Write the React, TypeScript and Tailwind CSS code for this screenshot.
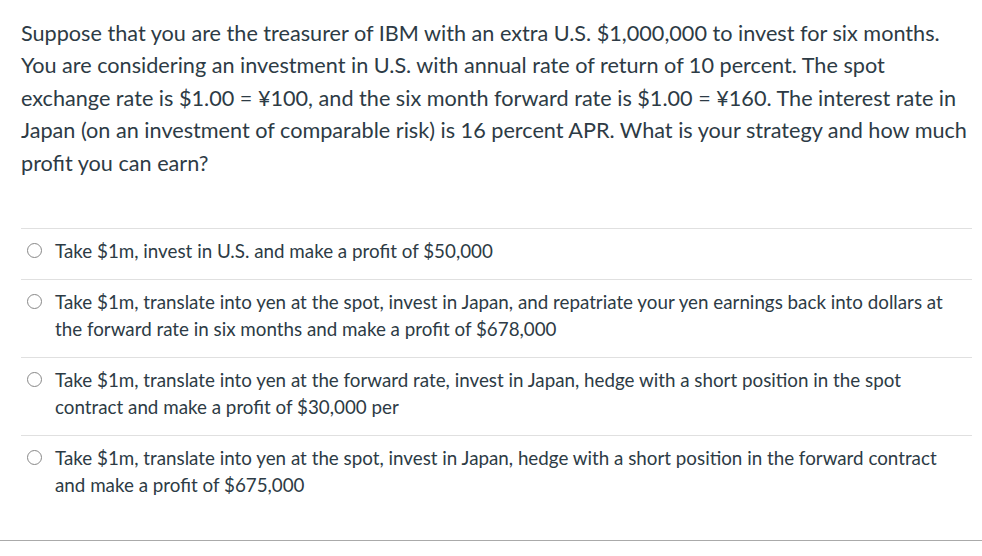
import React from "react";

const options = [
  "Take $1m, invest in U.S. and make a profit of $50,000",
  "Take $1m, translate into yen at the spot, invest in Japan, and repatriate your yen earnings back into dollars at the forward rate in six months and make a profit of $678,000",
  "Take $1m, translate into yen at the forward rate, invest in Japan, hedge with a short position in the spot contract and make a profit of $30,000 per",
  "Take $1m, translate into yen at the spot, invest in Japan, hedge with a short position in the forward contract and make a profit of $675,000",
];

export default function App() {
  return (
    <div className="w-[982px] h-[556px] bg-white overflow-hidden text-[#2d3b45]" style={{ fontFamily: "Lato, 'Open Sans', sans-serif" }}>
      <div className="h-[541px] border-b border-[#aaaaaa] flex flex-col">
        <p className="pl-[21px] pr-[12px] pt-[17px] text-[21.65px] leading-[32.4px]">
          Suppose that you are the treasurer of IBM with an extra U.S. $1,000,000 to invest for six months. You are considering an investment in U.S. with annual rate of return of 10 percent. The spot exchange rate is $1.00 = ¥100, and the six month forward rate is $1.00 = ¥160. The interest rate in Japan (on an investment of comparable risk) is 16 percent APR. What is your strategy and how much profit you can earn?
        </p>
        <div className="mt-[49px] ml-[21px] w-[951px] flex flex-col">
          {options.map((o, i) => (
            <div key={i} className="border-t border-[#e0e0e0] flex items-start pt-[8px] pb-[15px]">
              <span className="mt-[6px] ml-[6px] w-[15px] h-[15px] rounded-full border border-[#888888] shrink-0" />
              <span className="ml-[13px] pr-[4px] text-[18.8px] leading-[27px]">{o}</span>
            </div>
          ))}
        </div>
      </div>
    </div>
  );
}
